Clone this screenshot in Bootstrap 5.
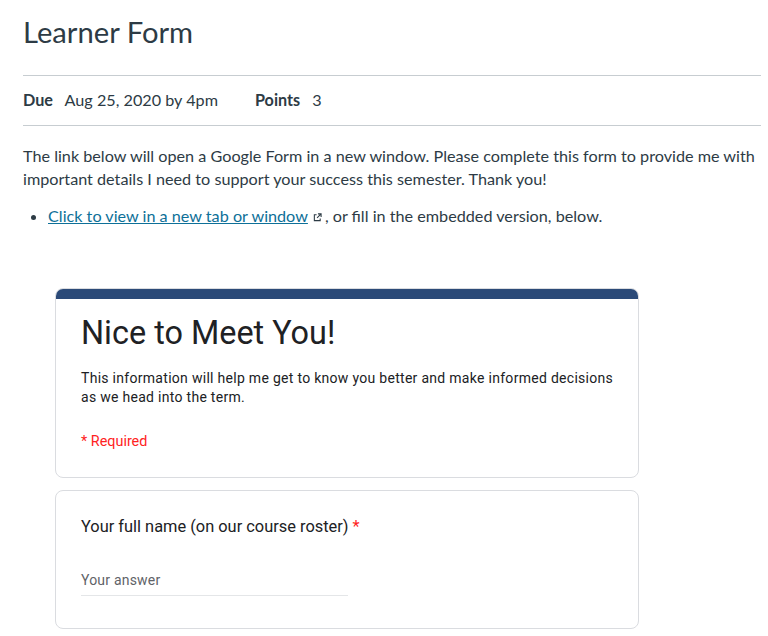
<!DOCTYPE html>
<html lang="en"><head><meta charset="utf-8">
<link href="https://cdn.jsdelivr.net/npm/bootstrap@5.3.0/dist/css/bootstrap.min.css" rel="stylesheet">
<style>
html,body{height:636px;overflow:hidden;background:#fff}
body{font-family:"Lato","Liberation Sans",sans-serif;color:#2d3b45;padding:0 7px 0 23px}
.page-title{font-size:29.2px;font-weight:400;line-height:34px;margin:15px 0 26px}
.meta-bar{border-top:1px solid #c7cdd1;border-bottom:1px solid #c7cdd1;height:51px;font-size:16.2px;gap:37px}
.meta-bar b{font-weight:700;margin-right:8px}
.intro{font-size:16.2px;line-height:23px;margin:18px 0 14px}
.link-list{font-size:16.2px;line-height:23px;padding-left:25px;margin:0}
.link-list a{color:#0e7098}
.ext-icon{width:9px;height:9px;margin:0 3px 0 5px}
.form-wrap{width:584px;margin:61px 0 0 32px;gap:12px;font-family:Roboto,"Liberation Sans",sans-serif;color:#202124}
.form-card{border:1px solid #dadce0;border-radius:8px;background:#fff}
.head-card{height:190px;overflow:hidden;padding:0}
.head-band{height:10px;background:#2b4a78}
.head-body{padding:12px 20px 12px 25px}
.form-title{font-size:32.4px;line-height:44px;margin:0 0 14px;font-weight:400}
.form-desc{font-size:14px;letter-spacing:.29px;line-height:19px;margin:0 0 25px}
.req{font-size:14.4px;line-height:20px;color:#f22;margin:0}
.q-card{height:139px;padding:26px 25px}
.q-title{font-size:16.4px;line-height:20px;margin:0 0 33px}
.q-title span{color:#f22}
.answer{font-size:14px;letter-spacing:.2px;line-height:20px;color:#5f6368;width:267px;border-bottom:1px solid #e4e6e8;padding-bottom:5px}
</style></head><body>
<h1 class="page-title">Learner Form</h1>
<div class="meta-bar d-flex align-items-center"><div><b>Due</b> Aug 25, 2020 by 4pm</div><div><b>Points</b> 3</div></div>
<p class="intro">The link below will open a Google Form in a new window. Please complete this form to provide me with important details I need to support your success this semester. Thank you!</p>
<ul class="link-list"><li><a href="#">Click to view in a new tab or window</a><svg class="ext-icon" viewBox="0 0 10 10" fill="none" stroke="#2d3b45" stroke-width="1.2"><path d="M4 2H1.5v6.5H8V6M5.5 1H9v3.5M9 1 4.5 5.5"/></svg>, or fill in the embedded version, below.</li></ul>
<div class="form-wrap d-flex flex-column">
<div class="form-card head-card"><div class="head-band"></div><div class="head-body"><h2 class="form-title">Nice to Meet You!</h2><p class="form-desc">This information will help me get to know you better and make informed decisions as we head into the term.</p><p class="req">* Required</p></div></div>
<div class="form-card q-card"><p class="q-title">Your full name (on our course roster) <span>*</span></p><div class="answer">Your answer</div></div>
</div>
</body></html>
